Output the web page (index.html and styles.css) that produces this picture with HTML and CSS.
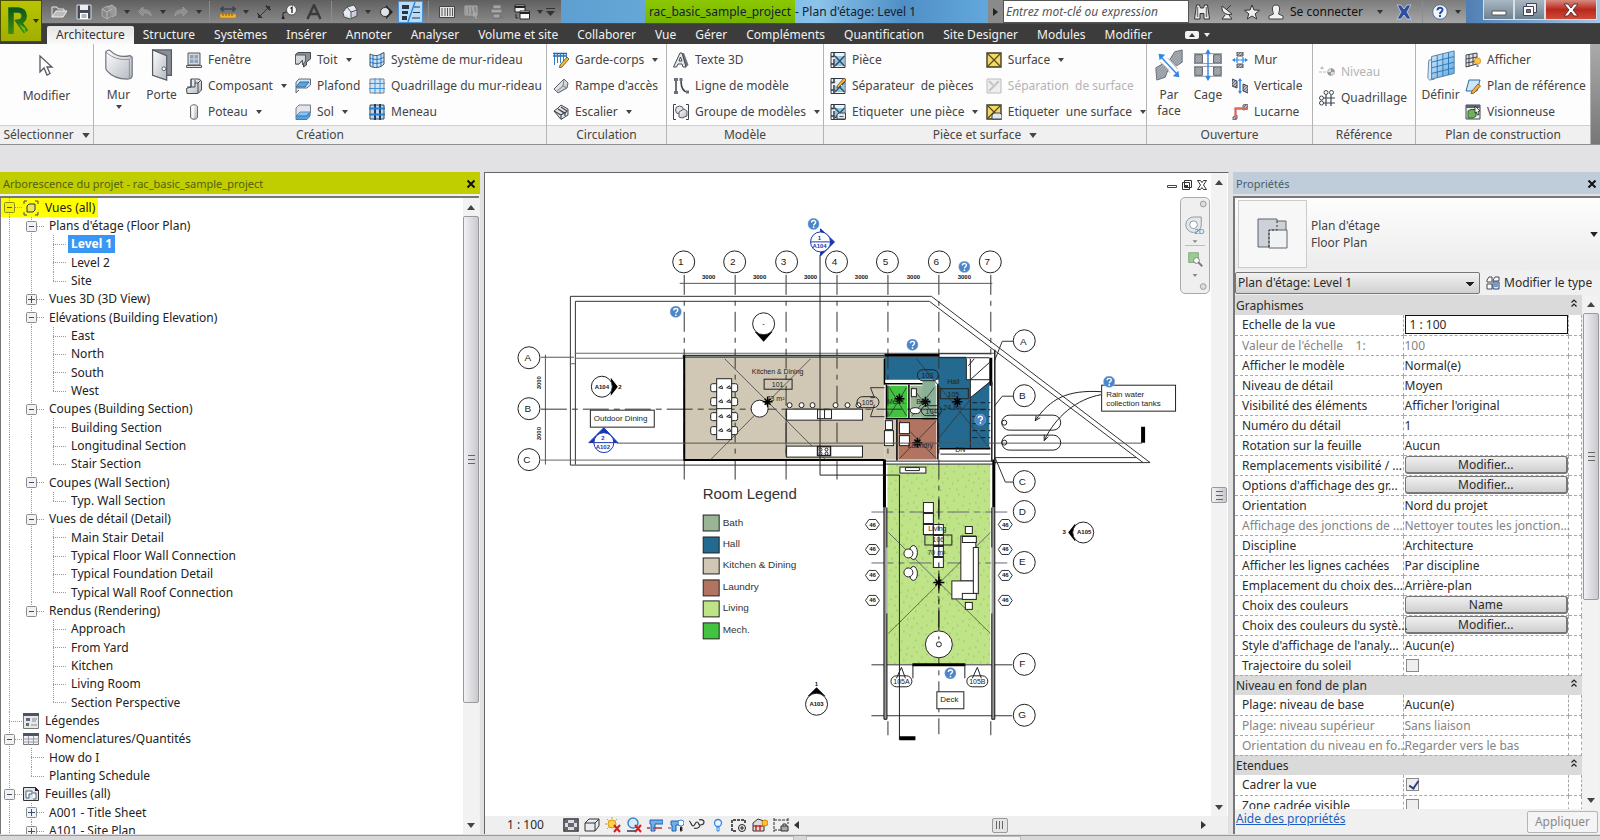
FILE: index.html
```html
<!DOCTYPE html>
<html lang="fr">
<head>
<meta charset="utf-8">
<title>rac_basic_sample_project - Plan d'étage: Level 1</title>
<link rel="stylesheet" href="styles.css">
</head>
<body>
<svg class="defs" aria-hidden="true">
<defs>
<linearGradient id="gr" x1="0" y1="0" x2="1" y2="1"><stop offset="0" stop-color="#fff"/><stop offset="1" stop-color="#b4b8c0"/></linearGradient>
<linearGradient id="bl" x1="0" y1="0" x2="1" y2="1"><stop offset="0" stop-color="#d6ecfb"/><stop offset="1" stop-color="#5fa3dc"/></linearGradient>
<linearGradient id="dk" x1="0" y1="0" x2="0" y2="1"><stop offset="0" stop-color="#0c5a1e"/><stop offset="1" stop-color="#3f8f10"/></linearGradient>
<pattern id="hatch" width="3" height="3" patternUnits="userSpaceOnUse"><rect width="3" height="3" fill="#b9bdc3"/><path d="M0 3L3 0" stroke="#555b63" stroke-width=".8"/></pattern>
<pattern id="grass" width="31" height="29" patternUnits="userSpaceOnUse"><rect width="31" height="29" fill="#bfe488"/><path d="M3 4h1M9 11h1M17 3h1M24 8h1M28 17h1M13 19h1M5 23h1M20 25h1M8 17h1M23 20h1M15 10h1M29 2h1M2 13h1M18 15h1M11 27h1M27 26h1" stroke="#7a9a4c" stroke-width="1"/></pattern>
<symbol id="minus" viewBox="0 0 11 11"><rect x=".5" y=".5" width="10" height="10" rx="1" fill="#f2f2f2" stroke="#8c8c8c"/><path d="M3 5.500h5" stroke="#35507e"/></symbol>
<symbol id="minusy" viewBox="0 0 11 11"><rect x=".5" y=".5" width="10" height="10" rx="1" fill="#f4f400" stroke="#8c8c20"/><path d="M3 5.500h5" stroke="#35507e"/></symbol>
<symbol id="plus" viewBox="0 0 11 11"><rect x=".5" y=".5" width="10" height="10" rx="1" fill="#f2f2f2" stroke="#8c8c8c"/><path d="M2 5.500h7M5.500 2v7" stroke="#35507e"/></symbol>
<symbol id="caret" viewBox="0 0 6 4"><path d="M0 0h6L3 4z" fill="currentColor"/></symbol>
<symbol id="up" viewBox="0 0 8 5"><path d="M4 0l4 5H0z" fill="#444"/></symbol>
<symbol id="down" viewBox="0 0 8 5"><path d="M4 5l4-5H0z" fill="#444"/></symbol>
<symbol id="close" viewBox="0 0 10 10"><path d="M1.500 1.500l7 7M8.500 1.500l-7 7" stroke="#111" stroke-width="2"/></symbol>
<symbol id="fold" viewBox="0 0 6 8"><path d="M.5 3.500L3 1l2.500 2.500M.5 7.500L3 5l2.500 2.500" fill="none" stroke="#222" stroke-width="1.200"/></symbol>
<symbol id="help" viewBox="0 0 12 12"><circle cx="6" cy="6" r="5.700" fill="#4a86c8" stroke="#8fb4de" stroke-width=".6"/><path d="M4 4.600C4 2 8.200 2 8.100 4.500 8 6 6.200 5.900 6.100 7.500" fill="none" stroke="#fff" stroke-width="1.400"/><circle cx="6.100" cy="9.300" r=".9" fill="#fff"/></symbol>

<symbol id="open" viewBox="0 0 16 16"><path d="M1 13V3h5l1 2h6v3" fill="#777" stroke="#e6e6e6"/><path d="M1 13l4-6h11l-4 6z" fill="#bbb" stroke="#f0f0f0"/></symbol>
<symbol id="save" viewBox="0 0 16 16"><path d="M1 1h14v14H1z" fill="#444b55" stroke="#d8dde6"/><path d="M4 1h8v5H4z" fill="#e9edf2"/><path d="M4 9h8v6H4z" fill="#fff"/><path d="M5.500 11h5M5.500 13h5" stroke="#667"/></symbol>
<symbol id="sync" viewBox="0 0 16 16"><path d="M1 5l5-3 5 3v7l-5 3-5-3z" fill="#888" stroke="#aaa"/><path d="M6 3l5-2 4 3v7l-4 2" fill="#999" stroke="#b0b0b0"/><path d="M6 8v7M1 5l5 3 5-3" stroke="#b8b8b8" fill="none"/></symbol>
<symbol id="undo" viewBox="0 0 16 16"><path d="M6 3L1.500 7.500 6 12V9c4-.5 6 .5 8 3 0-4.500-3-6.500-8-6z" fill="#8d8d8d" stroke="#a5a5a5" stroke-width=".7"/></symbol>
<symbol id="redo" viewBox="0 0 16 16"><path d="M10 3l4.500 4.500L10 12V9c-4-.5-6 .5-8 3 0-4.500 3-6.500 8-6z" fill="#8d8d8d" stroke="#a5a5a5" stroke-width=".7"/></symbol>
<symbol id="measure" viewBox="0 0 16 16"><path d="M1 5h14M3.500 2.500L1 5l2.500 2.500M12.500 2.500L15 5l-2.500 2.500" stroke="#3c4656" fill="none" stroke-width="1.600"/><path d="M0 10h16v4H0z" fill="#f2b32c" stroke="#b98210" stroke-width=".6"/><path d="M3 10v2M6 10v2M9 10v2M12 10v2" stroke="#7d570a"/></symbol>
<symbol id="dim" viewBox="0 0 16 16"><path d="M3 13L13 3M1 9l5 5M10 1l5 5" stroke="#333" fill="none"/><path d="M2 14v-5l5 5zM14 2v5L9 2z" fill="#333"/></symbol>
<symbol id="tag" viewBox="0 0 16 16"><path d="M2 14V9l6-2" stroke="#222" fill="none"/><path d="M.5 15l1.500-4 2 4z" fill="#222"/><circle cx="10.500" cy="6" r="5" fill="#f4f4f4" stroke="#555"/><path d="M9.500 4.500l1.500-1.200V9" stroke="#222" fill="none" stroke-width="1.300"/></symbol>
<symbol id="bigA" viewBox="0 0 16 16"><path d="M1.500 15L8 1l6.500 14M4 10h8" fill="none" stroke="#3a3a3a" stroke-width="2.400"/></symbol>
<symbol id="house" viewBox="0 0 16 16"><path d="M1 8l5-5 9 2v7l-7 3-6-2z" fill="url(#gr)" stroke="#4c5158"/><path d="M1 8l4-5 4 5v7M5 3l7-2 3 5-6 2" fill="#e8ebf0" stroke="#4c5158"/></symbol>
<symbol id="sect" viewBox="0 0 16 16"><path d="M8 1l7 7-7 7z" fill="#222"/><circle cx="7" cy="8" r="4.500" fill="#dfe3e8" stroke="#333"/></symbol>
<symbol id="thin" viewBox="0 0 20 20"><path d="M1 3h7v4H1zM1 9h6v3H1zM1 14h5v4H1z" fill="#26364a"/><path d="M14 0L7 20" stroke="#2684dd" stroke-width="1.400"/><path d="M13 5h6M12 10.500h7M11 16h8" stroke="#26364a" stroke-width="1.200"/></symbol>
<symbol id="win" viewBox="0 0 16 16"><path d="M.5 2.500h15v11H.5z" fill="#e4e4e4" stroke="#444"/><path d="M3 4v8M6 4v8M8.500 4v8M11 4v8M13.500 4v8" stroke="#555"/></symbol>
<symbol id="win2" viewBox="0 0 16 16"><path d="M1 2h12v9H1z" fill="#888" stroke="#b0b0b0"/><path d="M3 3v7M6 3v7M9 3v4" stroke="#bbb"/><path d="M9 6l5 5-2 .5 1 3-1.500.5-1-3L9 13z" fill="#a8a8a8"/></symbol>
<symbol id="win3" viewBox="0 0 16 16"><path d="M4 1h8v4H4zM2 5h11v4H2zM4 10h7v4H4z" fill="#a6a6a6" stroke="#707070"/><path d="M11 11l4 4M15 11l-4 4" stroke="#777"/></symbol>
<symbol id="win4" viewBox="0 0 16 16"><path d="M1 1h10v7H1z" fill="#eee" stroke="#222"/><path d="M6 7h9.500v8H6z" fill="#f8f8f8" stroke="#222"/><path d="M1 3h10M6 9h9" stroke="#222" stroke-width="2"/><path d="M2 10v4h2" fill="none" stroke="#222"/></symbol>
<symbol id="custom" viewBox="0 0 9 8"><path d="M0 .5h9" stroke="#333"/><path d="M0 3h9L4.500 8z" fill="#333"/></symbol>
<symbol id="bino" viewBox="0 0 16 16"><path d="M2.500 1h3l1 3h3l1-3h3L15.500 15h-5.500V9.500H6V15H.5z" fill="#eee" stroke="#333"/><path d="M3.500 3v10M12.500 3v10" stroke="#777" stroke-width="1.500"/></symbol>
<symbol id="dish" viewBox="0 0 16 16"><path d="M3 2c-1 6 4 10 10 8L3 2z" fill="#f2f2f2" stroke="#333"/><path d="M7 6l5-5M6 11l-3 4h10l-3-4" stroke="#333" fill="#f2f2f2"/></symbol>
<symbol id="star" viewBox="0 0 16 16"><path d="M8 1l2 5 5.500.3-4.300 3.500L12.700 15 8 12l-4.700 3 1.500-5.200L.5 6.300 6 6z" fill="#eee" stroke="#333"/></symbol>
<symbol id="user" viewBox="0 0 16 16"><path d="M8 1c3 0 4 2 3.500 5-.3 2-1 3-1 4l4.500 2v3H1v-3l4.500-2c0-1-.7-2-1-4C4 3 5 1 8 1z" fill="#f2f2f2" stroke="#444"/></symbol>
<symbol id="xch" viewBox="0 0 16 16"><path d="M1 1h4l3 4 3-4h4l-4 7 4 7h-4l-3-4-3 4H1l4-7z" fill="#2f4e9e" stroke="#c9d4ee" stroke-width=".8"/></symbol>
<symbol id="helpb" viewBox="0 0 16 16"><circle cx="8" cy="8" r="7.300" fill="#f2f5fa" stroke="#5b6c8c"/><path d="M5.500 6.300C5.500 3 10.700 3 10.500 6 10.400 8 8.100 7.800 8 10" fill="none" stroke="#1f4fa8" stroke-width="2"/><circle cx="8" cy="12" r="1.200" fill="#1f4fa8"/></symbol>

<symbol id="arrow" viewBox="0 0 16 24"><path d="M2 2v16l4-4 3 7 3-1.500L9 13h5z" fill="#fff" stroke="#555b63" stroke-width="1.300"/></symbol>
<symbol id="mur" viewBox="0 0 30 34"><path d="M1 3c2-2 4-2 5-1 5 5 13 7 21 5l2 2v19c0 3-2 4-5 4-9 0-17-3-22-9-1-1-1-2-1-3z" fill="url(#gr)" stroke="#70757d" stroke-width="1.300"/><path d="M1 3c6 6 14 9 25 8v21M26 11l3-3" fill="none" stroke="#8b9098"/></symbol>
<symbol id="porte" viewBox="0 0 22 34"><path d="M1 1h20v27h-5" fill="#8a8e96" stroke="#565b63" stroke-width="1.300"/><path d="M1 1l15 6v26L1 28z" fill="url(#gr)" stroke="#565b63" stroke-width="1.300"/><circle cx="13" cy="21" r="2" fill="#fff" stroke="#565b63"/></symbol>
<symbol id="fen" viewBox="0 0 16 16"><path d="M2 1h12v12H2z" fill="#d5d8dd" stroke="#555b63"/><path d="M4 3h3.500v3.500H4zM8.500 3H12v3.500H8.500zM4 7.500h3.500V11H4zM8.500 7.500H12V11H8.500z" fill="#8fa3b8"/><path d="M.5 13.500h15v2H.5z" fill="#e5e5e8" stroke="#555b63"/></symbol>
<symbol id="comp" viewBox="0 0 16 16"><path d="M5 1h8l2.500 2v9L12 15.500H1l-.5-5L5 9z" fill="url(#gr)" stroke="#454b53"/><path d="M5 1v8M9 2v7h-8M12 5v10M9 5h3l3-3" stroke="#454b53" fill="none"/></symbol>
<symbol id="pot" viewBox="0 0 16 16"><path d="M4.500 3c0-3 7-3 7 0v10c0 3-7 3-7 0z" fill="url(#gr)" stroke="#666c74"/><path d="M7 2v12" stroke="#fff" stroke-width="1.500"/></symbol>
<symbol id="toit" viewBox="0 0 16 16"><path d="M.5 2.500L3 .5h12.500V7l-4 3v3l-3 2V8L4 12H.5z" fill="#8b9097" stroke="#454b53"/><path d="M.5 3h10v6l-3 4V8L4 12H.5z" fill="#d4d7dc" stroke="#555b63"/></symbol>
<symbol id="plaf" viewBox="0 0 16 16"><path d="M1 4l3-3h11.500v6L12 10H1z" fill="#c9e3f7" stroke="#666c74"/><path d="M5 4h9l-4 5H1z" fill="#5fa3dc" stroke="#2c6ea8"/><path d="M1 10v5l3-3" fill="#ddd" stroke="#666c74"/></symbol>
<symbol id="sol" viewBox="0 0 16 16"><path d="M4 1h11.500v8L12 12H1V4z" fill="#e2e5e9" stroke="#777d85"/><path d="M5 8h10l-4 4H1z" fill="#8cc3ee" stroke="#4c92cf"/><path d="M1 12h11l3-3v3l-3 3.500H1z" fill="#5aa0de" stroke="#3a80bf"/></symbol>
<symbol id="smr" viewBox="0 0 16 16"><path d="M1 2c4 2 8 2 11 0l3-1.500V12c-3 4-10 4.500-14 2z" fill="#cfe6f8" stroke="#3f4a58"/><path d="M4 3v12M8 3.500v12M12 2v12M1 6c4 2 10 2 14-1M1 10c4 2 10 2 14-1" stroke="#1f74c4" fill="none"/></symbol>
<symbol id="qmr" viewBox="0 0 16 16"><path d="M1 1h14v14H1z" fill="#cfe4f5" stroke="#7d838b"/><path d="M6 0v16M11 0v16M0 5.500h16M0 10.500h16" stroke="#3d93e0"/></symbol>
<symbol id="men" viewBox="0 0 16 16"><path d="M1 1h14v14H1z" fill="#b9d9f2" stroke="#3a4450"/><path d="M6 0v16M11 0v16" stroke="#1f3f66" stroke-width="2"/><path d="M0 4.500h16M0 10.500h16" stroke="#2d7cc4" stroke-width="2"/></symbol>
<symbol id="garde" viewBox="0 0 16 16"><path d="M0 1.500h14M0 4h14" stroke="#1f62ae" stroke-width="1.600"/><path d="M1.500 2v11M4.500 2v9M7.500 2v9M10.500 2v8M13.500 2v6" stroke="#2d7cc4"/><path d="M14 5l2 2-7 8-2.500 1L7 13z" fill="#f3b545" stroke="#6b4a10" stroke-width=".8"/></symbol>
<symbol id="rampe" viewBox="0 0 16 16"><path d="M1 11L11 1l4 4-1 5-9 5z" fill="url(#gr)" stroke="#5c626a"/><path d="M11 1l-1 7-7 6M10 8l4 2" fill="none" stroke="#7c828a"/></symbol>
<symbol id="esc" viewBox="0 0 16 16"><path d="M1 7l4-3 3-3 7 4v6l-7 4.500z" fill="#e2e4e8" stroke="#454b53"/><path d="M1 7l7 4 3-2-6-4M8 11v4M5 5l7 4 2-2-6-4M12 9v3" fill="none" stroke="#454b53" stroke-width="1.300"/></symbol>
<symbol id="t3d" viewBox="0 0 16 16"><path d="M8 1h3l4.500 12-3 2.500L7 8z" fill="#6c727a"/><path d="M7 1h2l4 14h-3l-1-3H5l-1.500 3H.5z" fill="#e5e7ea" stroke="#444a52"/><path d="M6 9l1.500-4L9 9z" fill="#fff" stroke="#444a52"/></symbol>
<symbol id="lign" viewBox="0 0 16 16"><path d="M3 2v12M8 2c0 8 2 12 7 12" stroke="#3e444c" fill="none" stroke-width="1.500"/><path d="M1 0h4v3H1zM1 13h4v3H1zM6.500 0h3v3h-3zM13 12.500h3v3h-3z" fill="#6b7179"/></symbol>
<symbol id="grp" viewBox="0 0 16 16"><path d="M3 .5H.5v15H3M13 .5h2.500v15H13" fill="none" stroke="#3e444c"/><circle cx="6.500" cy="6" r="4" fill="#e2e4e8" stroke="#555b63"/><path d="M6 8l5-3 3 2v5l-5 2-3-1z" fill="url(#gr)" stroke="#555b63"/></symbol>
<symbol id="piece" viewBox="0 0 16 16"><path d="M1 .5h14v15H1z" fill="#f0f2f4" stroke="#2e3946"/><path d="M4 .5v4H1M4 7v8.500M1 12h3" fill="none" stroke="#2e3946" stroke-width="1.500"/><path d="M5 4h9.500v10H5z" fill="#9cc6df"/><path d="M5 4l9.500 10M14.500 4L5 14" stroke="#24506f" stroke-width="1.400"/></symbol>
<symbol id="psep" viewBox="0 0 16 16"><use href="#piece" width="16" height="16"/><path d="M5 4h7v4H5z" fill="#eef"/><path d="M14 0l2 2-7 7-2 1 .5-2.500z" fill="#f3b545" stroke="#6b4a10" stroke-width=".8"/></symbol>
<symbol id="petiq" viewBox="0 0 16 16"><use href="#piece" width="16" height="16"/><path d="M7 10.500l2-1.500h6.500v6H7z" fill="#e2e7ee" stroke="#3e444c"/><path d="M9.500 12.500h4" stroke="#555"/></symbol>
<symbol id="surf" viewBox="0 0 16 16"><path d="M1 1h14v14H1z" fill="#f3d96a" stroke="#3e3a22" stroke-width="1.400"/><path d="M2 2l12 12M14 2L2 14" stroke="#5a4c12" stroke-width="1.200"/></symbol>
<symbol id="ssep" viewBox="0 0 16 16"><path d="M1 1h14v14H1z" fill="#eee" stroke="#bbb"/><path d="M3 13L13 3M3 3l4 4" stroke="#c4c4c4" stroke-width="2"/></symbol>
<symbol id="setiq" viewBox="0 0 16 16"><use href="#surf" width="16" height="16"/><path d="M6 11l2-2h6l2 2v4H6z" fill="#e2e7ee" stroke="#3e444c"/></symbol>
<symbol id="face" viewBox="0 0 30 34"><path d="M16 11l5-8 8-2v13l-6 4z" fill="url(#hatch)" stroke="#666c74"/><path d="M1 20l7-4 6 6-3 8-9 3z" fill="url(#hatch)" stroke="#666c74"/><path d="M14 10l10 11M6 14l10 11" stroke="#aab" /><path d="M6 8l18 19" stroke="#2f86e4" stroke-width="1.500"/><path d="M4 5l7 1-6 6zM26 30l-7-1 6-6z" fill="#2f86e4"/></symbol>
<symbol id="cage" viewBox="0 0 30 34"><path d="M1 6h8v9H1zM21 6h8v9h-8zM1 19h8v9H1zM21 19h8v9h-8z" fill="url(#hatch)" stroke="#4e545c"/><path d="M0 5h30M0 15.500h30M0 18.500h30M0 29h30" stroke="#8b9098"/><path d="M15 4v26" stroke="#2f86e4" stroke-width="1.500"/><path d="M15 0l3 5h-6zM15 34l3-5h-6z" fill="#2f86e4"/></symbol>
<symbol id="omur" viewBox="0 0 16 16"><path d="M5 0h6v4H5zM5 12h6v4H5z" fill="url(#hatch)" stroke="#4e545c"/><path d="M1 8h14M5 5v6M11 5v6" stroke="#2f86e4" stroke-width="1.200"/><path d="M0 8l3-2v4zM16 8l-3-2v4z" fill="#2f86e4"/></symbol>
<symbol id="over" viewBox="0 0 16 16"><path d="M0 1l5 2v7L0 8zM11 6l5 2v7l-5-2z" fill="url(#hatch)" stroke="#3e444c"/><path d="M8 1v14" stroke="#2f86e4" stroke-width="1.500"/><path d="M8 0l2 3H6zM8 16l2-3H6z" fill="#2f86e4"/></symbol>
<symbol id="luc" viewBox="0 0 16 16"><path d="M11 1l5-1v5l-5 1zM1 13l4-2v4l-4 1z" fill="url(#hatch)" stroke="#666"/><path d="M4 14V5h11M3 12V4h10" stroke="#e0655c" fill="none" stroke-width="1.300"/></symbol>
<symbol id="niv" viewBox="0 0 16 16"><path d="M0 8h9" stroke="#bbb" stroke-dasharray="3 1"/><path d="M3 2l2 3H1z" fill="#bbb"/><circle cx="12" cy="8" r="3.500" fill="#ddd" stroke="#bbb"/><path d="M12 4.500V8h3.500a3.500 3.500 0 0 0-3.500-3.500zM12 11.500V8H8.500a3.500 3.500 0 0 0 3.500 3.500z" fill="#999"/></symbol>
<symbol id="quad" viewBox="0 0 16 16"><path d="M7 5v11M12 5v11M4 8h12M4 13h12" stroke="#3e444c" stroke-width="1.200"/><circle cx="7" cy="2.500" r="2" fill="#fff" stroke="#3e444c"/><circle cx="12.500" cy="2.500" r="2" fill="#fff" stroke="#3e444c"/><circle cx="2.500" cy="8" r="2" fill="#fff" stroke="#3e444c"/><circle cx="2.500" cy="13" r="2" fill="#fff" stroke="#3e444c"/></symbol>
<symbol id="def" viewBox="0 0 30 34"><path d="M2 12l6-2v22l-5 1-2-2z" fill="#d9e8f4" stroke="#5d87ab"/><path d="M5 8l24-6v24L5 32z" fill="url(#bl)" stroke="#4b7ea8"/><path d="M11 6.500v24M17 5v24M23 3.500v24M5 14l24-6M5 20l24-6M5 26l24-6" stroke="#2b76b8"/></symbol>
<symbol id="aff" viewBox="0 0 16 16"><path d="M1 3l11-2v11L1 15z" fill="#e3e5e8" stroke="#3e444c"/><path d="M4 2.500v12M8 2v11M1 7l11-2M1 11l11-2" stroke="#3e444c"/><circle cx="12.500" cy="9" r="3.200" fill="#ffc44a" stroke="#d08a10" stroke-width=".7"/><path d="M11.500 12.500h2V15h-2z" fill="#889"/></symbol>
<symbol id="pref" viewBox="0 0 16 16"><path d="M4 2h11l-3 11H1z" fill="#cfe6f8" stroke="#2d6ca8"/><path d="M13 6l2.500 2L9 15l-3 1L7 13z" fill="#f3b545" stroke="#6b4a10" stroke-width=".8"/></symbol>
<symbol id="vis" viewBox="0 0 16 16"><path d="M1 1h14v14H1z" fill="#e9ebee" stroke="#3e444c"/><path d="M1 1h14v3H1z" fill="#5d636b"/><path d="M3 7l3-1.500h5V12l-3 2H3z" fill="#6fb25c" stroke="#2e5e22"/><path d="M10 2l5 5-2 .5 1 3-1.500.5-1-3L10 9z" fill="#fff" stroke="#222" stroke-width=".8"/></symbol>
</defs>
</svg>

<header class="top">
  <div class="titlebar">
    <div class="qat">
      <button aria-label="Ouvrir"><svg><use href="#open"/></svg></button><button aria-label="Enregistrer"><svg><use href="#save"/></svg></button><button aria-label="Synchroniser"><svg><use href="#sync"/></svg></button><button class="cr" aria-label="Plus"><svg><use href="#caret"/></svg></button><button aria-label="Annuler"><svg><use href="#undo"/></svg></button><button class="cr" aria-label="Plus"><svg><use href="#caret"/></svg></button><button aria-label="Rétablir"><svg><use href="#redo"/></svg></button><button class="cr" aria-label="Plus"><svg><use href="#caret"/></svg></button><span class="sep"></span><button aria-label="Mesurer"><svg><use href="#measure"/></svg></button><button class="cr" aria-label="Plus"><svg><use href="#caret"/></svg></button><button aria-label="Cote"><svg><use href="#dim"/></svg></button><button aria-label="Etiquette"><svg><use href="#tag"/></svg></button><button aria-label="Texte"><svg><use href="#bigA"/></svg></button><span class="sep"></span><button aria-label="Vue 3D"><svg><use href="#house"/></svg></button><button class="cr" aria-label="Plus"><svg><use href="#caret"/></svg></button><button aria-label="Coupe"><svg><use href="#sect"/></svg></button><button class="on" aria-label="Lignes fines"><svg><use href="#thin"/></svg></button><span class="sep"></span><button aria-label="Fenêtre"><svg><use href="#win"/></svg></button><button aria-label="Fermer"><svg><use href="#win2"/></svg></button><button aria-label="Remplacer"><svg><use href="#win3"/></svg></button><button aria-label="Basculer"><svg><use href="#win4"/></svg></button><button class="cr" aria-label="Plus"><svg><use href="#caret"/></svg></button><button class="cr last" aria-label="Personnaliser"><svg><use href="#custom"/></svg></button>
    </div>
    <div class="doc"><mark>rac_basic_sample_project</mark><span>- Plan d'étage: Level 1</span></div>
    <div class="expand"><svg viewBox="0 0 5 8"><path d="M0 0l5 4-5 4z" fill="#222"/></svg></div>
    <input class="search" type="text" aria-label="Recherche" placeholder="Entrez mot-clé ou expression">
    <div class="info">
      <button aria-label="Rechercher"><svg><use href="#bino"/></svg></button><button aria-label="Communication"><svg><use href="#dish"/></svg></button><button aria-label="Favoris"><svg><use href="#star"/></svg></button>
      <button class="conn"><svg><use href="#user"/></svg>Se connecter</button><button class="cr" aria-label="Plus"><svg><use href="#caret"/></svg></button><button aria-label="Exchange"><svg><use href="#xch"/></svg></button><span class="sep"></span><button aria-label="Aide"><svg><use href="#helpb"/></svg></button><button class="cr" aria-label="Plus"><svg><use href="#caret"/></svg></button>
    </div>
    <div class="wctl">
      <button aria-label="Réduire"><svg viewBox="0 0 16 16"><path d="M1 9h14v4H1z" fill="#fff" stroke="#555"/></svg></button><button aria-label="Restaurer"><svg viewBox="0 0 16 16"><path d="M4.500 1.500h10v9h-10z" fill="#eee" stroke="#445"/><path d="M1.500 4.500h10v9h-10z" fill="#fff" stroke="#445"/><path d="M4.500 7.500h4v3h-4z" fill="#778" stroke="#445"/></svg></button><button class="x" aria-label="Fermer"><svg viewBox="0 0 16 16"><path d="M1 2h4l3 4 3-4h4l-5 6 5 6h-4l-3-4-3 4H1l5-6z" fill="#fff" stroke="#533"/></svg></button>
    </div>
  </div>
  <nav class="tabs">
    <a class="sel" href="#a">Architecture</a><a href="#a">Structure</a><a href="#a">Systèmes</a><a href="#a">Insérer</a><a href="#a">Annoter</a><a href="#a">Analyser</a><a href="#a">Volume et site</a><a href="#a">Collaborer</a><a href="#a">Vue</a><a href="#a">Gérer</a><a href="#a">Compléments</a><a href="#a">Quantification</a><a href="#a">Site Designer</a><a href="#a">Modules</a><a href="#a">Modifier</a>
    <button class="min" aria-label="Réduire le ruban"><svg class="pill" viewBox="0 0 14 8"><rect width="14" height="8" rx="2" fill="#f2f2f2"/><path d="M7 2l3 4H4z" fill="#333"/></svg><svg class="c"><use href="#caret"/></svg></button>
  </nav>
  <button class="app" aria-label="Menu de l'application"><svg class="r" viewBox="0 0 20 28"><path d="M3 27V3h7c8 0 8 11 1 12l7 10" fill="none" stroke="url(#dk)" stroke-width="5.500"/><path d="M11 17l6 4 1 6" fill="#6fbf12"/></svg><svg class="c"><use href="#caret"/></svg></button>

  <div class="ribbon">
    <section class="panel"><div class="body mod"><button class="big"><svg class="ar"><use href="#arrow"/></svg>Modifier</button></div><h2>Sélectionner <svg class="c"><use href="#caret"/></svg></h2></section>
    <section class="panel"><div class="body">
      <button class="big"><svg><use href="#mur"/></svg>Mur<svg class="c"><use href="#caret"/></svg></button>
      <button class="big"><svg><use href="#porte"/></svg>Porte</button>
      <div class="col c1"><button><svg><use href="#fen"/></svg>Fenêtre</button><button><svg><use href="#comp"/></svg>Composant<svg class="c"><use href="#caret"/></svg></button><button><svg><use href="#pot"/></svg>Poteau<svg class="c"><use href="#caret"/></svg></button></div>
      <div class="col c2"><button><svg><use href="#toit"/></svg>Toit<svg class="c"><use href="#caret"/></svg></button><button><svg><use href="#plaf"/></svg>Plafond</button><button><svg><use href="#sol"/></svg>Sol<svg class="c"><use href="#caret"/></svg></button></div>
      <div class="col"><button><svg><use href="#smr"/></svg>Système de mur-rideau</button><button><svg><use href="#qmr"/></svg>Quadrillage du mur-rideau</button><button><svg><use href="#men"/></svg>Meneau</button></div>
    </div><h2>Création</h2></section>
    <section class="panel"><div class="body"><div class="col"><button><svg><use href="#garde"/></svg>Garde-corps<svg class="c"><use href="#caret"/></svg></button><button><svg><use href="#rampe"/></svg>Rampe d'accès</button><button><svg><use href="#esc"/></svg>Escalier<svg class="c"><use href="#caret"/></svg></button></div></div><h2>Circulation</h2></section>
    <section class="panel"><div class="body"><div class="col"><button><svg><use href="#t3d"/></svg>Texte 3D</button><button><svg><use href="#lign"/></svg>Ligne de modèle</button><button><svg><use href="#grp"/></svg>Groupe de modèles<svg class="c"><use href="#caret"/></svg></button></div></div><h2>Modèle</h2></section>
    <section class="panel"><div class="body"><div class="col c3"><button><svg><use href="#piece"/></svg>Pièce</button><button><svg><use href="#psep"/></svg>Séparateur  de pièces</button><button><svg><use href="#petiq"/></svg>Etiqueter  une pièce<svg class="c"><use href="#caret"/></svg></button></div>
      <div class="col"><button><svg><use href="#surf"/></svg>Surface<svg class="c"><use href="#caret"/></svg></button><button class="off" disabled><svg><use href="#ssep"/></svg>Séparation  de surface</button><button><svg><use href="#setiq"/></svg>Etiqueter  une surface<svg class="c"><use href="#caret"/></svg></button></div></div><h2>Pièce et surface <svg class="c"><use href="#caret"/></svg></h2></section>
    <section class="panel"><div class="body ouv"><button class="big"><svg><use href="#face"/></svg>Par<br>face</button><button class="big"><svg><use href="#cage"/></svg>Cage</button>
      <div class="col"><button><svg><use href="#omur"/></svg>Mur</button><button><svg><use href="#over"/></svg>Verticale</button><button><svg><use href="#luc"/></svg>Lucarne</button></div></div><h2>Ouverture</h2></section>
    <section class="panel"><div class="body"><div class="col mid"><button class="off" disabled><svg><use href="#niv"/></svg>Niveau</button><button><svg><use href="#quad"/></svg>Quadrillage</button></div></div><h2>Référence</h2></section>
    <section class="panel"><div class="body"><button class="big"><svg><use href="#def"/></svg>Définir</button>
      <div class="col"><button><svg><use href="#aff"/></svg>Afficher</button><button><svg><use href="#pref"/></svg>Plan de référence</button><button><svg><use href="#vis"/></svg>Visionneuse</button></div></div><h2>Plan de construction</h2></section>
    <div class="tail"></div>
  </div>
</header>

<main class="work">
  <section class="browser">
    <h1>Arborescence du projet - rac_basic_sample_project<button aria-label="Fermer"><svg><use href="#close"/></svg></button></h1>
    <div class="pane">
      <ul class="tree">
        <li><span class="hl"><button class="t" aria-label="Réduire"><svg><use href="#minusy"/></svg></button><svg class="ic" viewBox="0 0 16 16"><path d="M1 4V1h3M12 1h3v3M15 12v3h-3M4 15H1v-3" fill="none" stroke="#444"/><path d="M4 6l2-2h6v6l-2 2H4z" fill="#e8e860" stroke="#333"/></svg>Vues (all)</span></li>
        <li><i class="v"></i><button class="t" aria-label="Réduire"><svg><use href="#minus"/></svg></button><span>Plans d'étage (Floor Plan)</span></li>
        <li><i class="v"></i><i class="v"></i><i class="e"></i><b>Level 1</b></li>
        <li><i class="v"></i><i class="v"></i><i class="e"></i><span>Level 2</span></li>
        <li><i class="v"></i><i class="v"></i><i class="e z"></i><span>Site</span></li>
        <li><i class="v"></i><button class="t" aria-label="Développer"><svg><use href="#plus"/></svg></button><span>Vues 3D (3D View)</span></li>
        <li><i class="v"></i><button class="t" aria-label="Réduire"><svg><use href="#minus"/></svg></button><span>Elévations (Building Elevation)</span></li>
        <li><i class="v"></i><i class="v"></i><i class="e"></i><span>East</span></li>
        <li><i class="v"></i><i class="v"></i><i class="e"></i><span>North</span></li>
        <li><i class="v"></i><i class="v"></i><i class="e"></i><span>South</span></li>
        <li><i class="v"></i><i class="v"></i><i class="e z"></i><span>West</span></li>
        <li><i class="v"></i><button class="t" aria-label="Réduire"><svg><use href="#minus"/></svg></button><span>Coupes (Building Section)</span></li>
        <li><i class="v"></i><i class="v"></i><i class="e"></i><span>Building Section</span></li>
        <li><i class="v"></i><i class="v"></i><i class="e"></i><span>Longitudinal Section</span></li>
        <li><i class="v"></i><i class="v"></i><i class="e z"></i><span>Stair Section</span></li>
        <li><i class="v"></i><button class="t" aria-label="Réduire"><svg><use href="#minus"/></svg></button><span>Coupes (Wall Section)</span></li>
        <li><i class="v"></i><i class="v"></i><i class="e z"></i><span>Typ. Wall Section</span></li>
        <li><i class="v"></i><button class="t" aria-label="Réduire"><svg><use href="#minus"/></svg></button><span>Vues de détail (Detail)</span></li>
        <li><i class="v"></i><i class="v"></i><i class="e"></i><span>Main Stair Detail</span></li>
        <li><i class="v"></i><i class="v"></i><i class="e"></i><span>Typical Floor Wall Connection</span></li>
        <li><i class="v"></i><i class="v"></i><i class="e"></i><span>Typical Foundation Detail</span></li>
        <li><i class="v"></i><i class="v"></i><i class="e z"></i><span>Typical Wall Roof Connection</span></li>
        <li><i class="v"></i><button class="t end" aria-label="Réduire"><svg><use href="#minus"/></svg></button><span>Rendus (Rendering)</span></li>
        <li><i class="v"></i><i></i><i class="e"></i><span>Approach</span></li>
        <li><i class="v"></i><i></i><i class="e"></i><span>From Yard</span></li>
        <li><i class="v"></i><i></i><i class="e"></i><span>Kitchen</span></li>
        <li><i class="v"></i><i></i><i class="e"></i><span>Living Room</span></li>
        <li><i class="v"></i><i></i><i class="e z"></i><span>Section Perspective</span></li>
        <li><i class="e"></i><svg class="ic" viewBox="0 0 16 16"><path d="M.5.500h15v15H.5z" fill="#e6e8ea" stroke="#777"/><path d="M0 0h16v3H0z" fill="#4b5662"/><path d="M3 5h4v3H3zM3 10h3v3H3z" fill="#667"/><path d="M9 6h5M9 8h4M8 12h6" stroke="#889"/></svg>Légendes</li>
        <li><button class="t" aria-label="Réduire"><svg><use href="#minus"/></svg></button><svg class="ic" viewBox="0 0 16 16"><path d="M.5 2.500h15v11H.5z" fill="#f2f3f5" stroke="#777"/><path d="M0 2h16v3H0z" fill="#4b5662"/><path d="M5.500 5v9M10.500 5v9M0 8h16M0 11h16" stroke="#99a"/></svg>Nomenclatures/Quantités</li>
        <li><i class="v"></i><i class="e"></i><span>How do I</span></li>
        <li><i class="v"></i><i class="e z"></i><span>Planting Schedule</span></li>
        <li><button class="t" aria-label="Réduire"><svg><use href="#minus"/></svg></button><svg class="ic" viewBox="0 0 16 16"><path d="M.5 1.500h12l3 3v10H.5z" fill="#dde3ea" stroke="#333"/><path d="M3 5h6v3H6v4H3zM10 7h3v6h-3" fill="#f8fafc" stroke="#567"/><path d="M12 1v4h4" fill="#222"/></svg>Feuilles (all)</li>
        <li><i class="v"></i><button class="t" aria-label="Développer"><svg><use href="#plus"/></svg></button><span>A001 - Title Sheet</span></li>
        <li><i class="v"></i><button class="t" aria-label="Développer"><svg><use href="#plus"/></svg></button><span>A101 - Site Plan</span></li>
      </ul>
      <div class="vbar"><svg><use href="#up"/></svg><div class="track"><div class="thumb tree-thumb"></div></div><svg><use href="#down"/></svg></div>
    </div>
  </section>

  <section class="canvas">
    <div class="view">
      <svg class="plan" viewBox="485 173 727 644" font-family="Liberation Sans, Arial, sans-serif" fill="none" stroke="#222" stroke-width="1" shape-rendering="auto">
        <g stroke="none">
          <path d="M684 356h201v104h-201z" fill="#d0c8b4"/>
          <path d="M885 420h14v40h-14z" fill="#d0c8b4"/>
          <path d="M885 357h82v23h4v18l19-16v66h-51v-68h-54z" fill="#24698f"/>
          <path d="M887 386h21v32h-21z" fill="#42c440"/>
          <path d="M911 386h26v32h-26z" fill="#9ab596"/><path d="M923 380h13v42h-13z" fill="#8ab098"/>
          <path d="M899 420h38v40h-38z" fill="#b07460"/>
          <path d="M888 465h103v200h-103z" fill="url(#grass)"/>
        </g>
        <!-- site outline -->
        <path d="M1151 463L932 296.500H570.500V465.500H884M1144 463L930 301.500H575.500V465M995 463h156M995 458h142" stroke="#333"/>
        <path d="M575 353.500h420M575 358.500h109M541 460.500h143M570 364h5" stroke="#666"/>
        <!-- grid lines -->
        <g stroke="#333">
          <path d="M684.500 275v207M735.500 275v207M786.500 275v207M837.500 275v207M888.500 275v185M939.500 275v460M991.500 275v80" stroke-dasharray="20 6 5 6"/>
          <path d="M888.500 722v14M991.500 722v14"/>
          <path d="M680 283.500h313M545.500 355v110M541 357.500h33" stroke="#555"/>
          <path d="M541 409.500h450" stroke-dasharray="26 5 6 5"/>
          <path d="M872 512.500h141M872 563.500h141" stroke="#667" stroke-dasharray="22 5 6 5"/>
          <path d="M872 665.500h141M872 716.500h141"/>
          <path d="M1014 341.500h-11l-8 20M1014 396.500h-11l-8 10M1014 482.500h-8l-10-24"/>
        </g>
        <!-- walls -->
        <path d="M683 356.500h202" stroke-width="3" stroke="#333"/><path d="M684 357h201" stroke="#889a90"/>
        <path d="M684.500 356v105M684 460.500h201" stroke="#000" stroke-width="2"/>
        <path d="M885 355.500h55" stroke="#000" stroke-width="3"/><path d="M940 358h50M940 354h51"/>
        <path d="M885 359v26M885 384h38M909.500 385v34M938.500 384v76M886 419h52M897.500 420v41M887 385v33" stroke="#000" stroke-width="1.500"/>
        <path d="M940 449h51" stroke="#000" stroke-width="2"/><path d="M941 454.500h50M885 461.500h110M885 464.500h110"/>
        <path d="M884.500 508v212h3V508M992.500 508v212h3V508" fill="#999" stroke="#111"/>
        <path d="M887.500 548v66M992.500 548v66" stroke="#fff"/>
        <path d="M885 460v48M994.500 460v48M991.500 358v28" stroke="#000" stroke-width="3"/>
        <path d="M992.500 382v80M995.500 350v115" stroke="#222" stroke-width="1.500"/>
        <path d="M967 359v21h24M971 359v90M971 380l20-18M975 359l-6 7M971 398l20-16" />
        <path d="M973 403h18M973 410h18M973 417h18M973 424h18M973 431h18M973 438h18" stroke="#123" stroke-dasharray="5 3"/>
        <path d="M917 359l74 90M890 388l17 28M907 388l-17 28M913 388l22 28M935 388l-22 28M900 421l37 38M937 421l-37 38M938 440l33-40" stroke="#333" stroke-width=".8"/>
        <!-- kitchen -->
        <path d="M725 359l101 101M811 359L711 460" stroke="#444" stroke-width=".8"/>
        <g fill="#fff" stroke="#222">
          <rect x="711" y="384" width="27" height="8" rx="2"/><rect x="711" y="398" width="27" height="8" rx="2"/><rect x="711" y="413" width="27" height="8" rx="2"/><rect x="711" y="427" width="27" height="8" rx="2"/>
          <rect x="717" y="379" width="15" height="61"/><path d="M717 409h15"/>
          <path d="M719 388l3-2 1 3zM727 388l3-2 1 3zM719 402l3-2 1 3zM727 402l3-2 1 3zM719 417l3-2 1 3zM727 417l3-2 1 3zM719 431l3-2 1 3zM727 431l3-2 1 3z"/>
          <circle cx="760" cy="409" r="8.500"/>
          <rect x="787" y="409.500" width="76" height="11"/><rect x="787" y="446.500" width="76" height="11"/><rect x="818" y="410" width="14" height="9"/><path d="M825 410v9"/>
          <rect x="818" y="447" width="13" height="9" stroke-width="1.500"/><circle cx="821" cy="450" r="1.500"/><circle cx="827" cy="450" r="1.500"/><circle cx="821" cy="454" r="1.500"/><circle cx="827" cy="454" r="1.500"/>
          <circle cx="790" cy="405.500" r="2.500"/><circle cx="802" cy="405.500" r="2.500"/><circle cx="813" cy="405.500" r="2.500"/><circle cx="836" cy="405.500" r="2.500"/><circle cx="848" cy="405.500" r="2.500"/><circle cx="859" cy="405.500" r="2.500"/>
          <rect x="900" y="423" width="10" height="11"/><rect x="900" y="436" width="10" height="10"/><rect x="885" y="431" width="9" height="15"/><rect x="886" y="421" width="7" height="9"/><rect x="912" y="389" width="5" height="8"/><ellipse cx="916" cy="411" rx="5" ry="3"/>
        </g>
        <path d="M786.500 409v48" stroke="#333"/>
        <path d="M885 388h-14l4 10-4 0M885 417h-14l4-12" stroke="#333"/>
        <rect x="857.500" y="397" width="22" height="11" rx="5.500"/><rect x="764.500" y="379.500" width="28" height="10"/><rect x="918" y="370" width="21" height="11" rx="5.500"/><rect x="941" y="389" width="28" height="10"/><rect x="922" y="406" width="20" height="10" rx="5"/>
        <!-- living -->
        <path d="M889 533l102 101M991 533L889 634" stroke="#455" stroke-width=".8"/>
        <g fill="#fff" stroke="#222">
          <rect x="900.500" y="467.500" width="26" height="6"/><path d="M906 468h14v3h-14z"/>
          <rect x="924" y="503" width="10" height="10"/><rect x="924" y="514" width="10" height="10"/><rect x="924" y="525" width="10" height="10"/>
          <rect x="934" y="525" width="10" height="10"/><rect x="934" y="536" width="10" height="10"/><rect x="934" y="547" width="10" height="10"/><rect x="934" y="558" width="10" height="10"/>
          <rect x="966" y="527" width="7" height="7"/><rect x="966" y="603" width="7" height="7"/>
          <rect x="961.500" y="536.500" width="15" height="45"/><rect x="952.500" y="581.500" width="22" height="18"/><rect x="974" y="548" width="5" height="46"/><rect x="963" y="537" width="14" height="6"/><rect x="963" y="594" width="14" height="6"/>
          <ellipse cx="914" cy="553" rx="4" ry="7"/><circle cx="909" cy="554" r="4.500"/><ellipse cx="914" cy="574" rx="4" ry="7"/><circle cx="909" cy="573" r="4.500"/>
          <circle cx="939.500" cy="645" r="13.500"/><circle cx="939.500" cy="645" r="2.500"/>
          <rect x="937.500" y="692.500" width="27" height="17"/>
        </g>
        <rect x="925.500" y="535.500" width="27" height="10"/>
        <path d="M939.500 500v140" stroke="#111" stroke-dasharray="20 6 5 6"/>
        <path d="M913 665.500h53" stroke="#000" stroke-width="3"/><path d="M913.500 665v14M965.500 665v14M902 668l-5 11M902 668l4 11M978 668l-5 11M978 668l4 11"/>
        <rect x="891.500" y="676.500" width="21" height="11" rx="5.500"/><rect x="967.500" y="676.500" width="21" height="11" rx="5.500"/>
        <!-- center marks -->
        <path d="M763 402h10M768 397v10M921 402h10M926 397v10M895 399h10M900 394v10M953 402h10M958 397v10M913 443h10M918 438v10M934 583h11M939.500 577v12M765 399l6 6M771 399l-6 6M897 396l6 6M903 396l-6 6M923 399l6 6M929 399l-6 6M955 399l6 6M961 399l-6 6M915 440l6 6M921 440l-6 6M936 580l6 6M942 580l-6 6" stroke="#000" stroke-width="1.500"/>
        <!-- section lines -->
        <path d="M820.500 255v220.500h79.500v265" stroke="#222"/><path d="M617 443.500h526" stroke="#555"/>
        <path d="M900 737h16v4h-16zM1142 427h4v16h-4z" fill="#000" stroke="none"/>
        <!-- tanks and leaders -->
        <rect x="1002.500" y="415.500" width="59" height="15" rx="7.500"/><rect x="1002.500" y="435.500" width="59" height="15" rx="7.500"/><circle cx="1005" cy="423" r="2.500"/><circle cx="1005" cy="443" r="2.500"/>
        <path d="M1102 392c-34-2-51 7-66 29l1-5M1036 421l5-3M1102 395c-24 4-46 22-57 46l0-6M1045 441l4-4"/>
        <rect x="1102.500" y="385.500" width="74" height="26" fill="#fff"/><rect x="590.500" y="410.500" width="64" height="17" fill="#fff"/>
        <!-- grid bubbles -->
        <g fill="#fff"><circle cx="684" cy="262" r="11"/><circle cx="735" cy="262" r="11"/><circle cx="787" cy="262" r="11"/><circle cx="837" cy="262" r="11"/><circle cx="888" cy="262" r="11"/><circle cx="940" cy="262" r="11"/><circle cx="991" cy="262" r="11"/>
        <circle cx="529" cy="358" r="11"/><circle cx="529" cy="409" r="11"/><circle cx="529" cy="460" r="11"/>
        <circle cx="1025" cy="341" r="11"/><circle cx="1025" cy="396" r="11"/><circle cx="1025" cy="482" r="11"/><circle cx="1025" cy="512" r="11"/><circle cx="1025" cy="563" r="11"/><circle cx="1025" cy="665" r="11"/><circle cx="1025" cy="716" r="11"/></g>
        <g fill="#fff" stroke="#333"><path d="M866 525l3.500-5h7l3.500 5-3.500 5h-7zM866 550l3.500-5h7l3.500 5-3.500 5h-7zM866 576l3.500-5h7l3.500 5-3.500 5h-7zM866 601l3.500-5h7l3.500 5-3.500 5h-7zM999 525l3.500-5h7l3.500 5-3.500 5h-7zM999 550l3.500-5h7l3.500 5-3.500 5h-7zM999 576l3.500-5h7l3.500 5-3.500 5h-7zM999 601l3.500-5h7l3.500 5-3.500 5h-7z"/></g>
        <!-- elevation markers -->
        <g fill="#000" stroke="none"><path d="M755 332h18l-9 10zM611 378v18l7-9zM808 697h18l-9-9zM1076 524v18l-7-9z"/></g>
        <g fill="#fff"><circle cx="764" cy="324" r="11"/><circle cx="602" cy="387" r="10.500"/><circle cx="817" cy="705" r="11"/><circle cx="1084" cy="533" r="10.500"/></g>
        <g stroke="#1a35b0"><path d="M821 229l14 13-14 14zM589 443l15-15 14 15z" fill="#1a35b0"/><circle cx="821" cy="242" r="10" fill="#fff"/><circle cx="604" cy="443" r="10" fill="#fff"/><path d="M811 242h20M594 443h20"/></g>
        <g stroke="none" fill="#222" font-size="10" text-anchor="middle">
          <text x="681" y="265">1</text><text x="733" y="265">2</text><text x="784" y="265">3</text><text x="835" y="265">4</text><text x="886" y="265">5</text><text x="937" y="265">6</text><text x="988" y="265">7</text>
          <text x="528" y="361">A</text><text x="528" y="412">B</text><text x="527" y="463">C</text>
          <text x="1024" y="345">A</text><text x="1023" y="399">B</text><text x="1023" y="485">C</text><text x="1023" y="515">D</text><text x="1023" y="566">E</text><text x="1023" y="668">F</text><text x="1023" y="719">G</text>
        </g>
        <g stroke="none" fill="#111" font-size="6" font-weight="bold" text-anchor="middle">
          <text x="709" y="279">3000</text><text x="760" y="279">3000</text><text x="811" y="279">3000</text><text x="862" y="279">3000</text><text x="914" y="279">3000</text><text x="965" y="279">3000</text>
          <text transform="translate(541 383) rotate(-90)">3000</text><text transform="translate(541 434) rotate(-90)">3000</text>
          <text x="602" y="389">A104</text><text x="620" y="389">2</text><text x="817" y="707">A103</text><text x="817" y="687">1</text><text x="1085" y="535">A105</text><text x="1065" y="535">3</text><text x="764" y="326">-</text>
          <text x="873" y="527">46</text><text x="873" y="552">46</text><text x="873" y="578">46</text><text x="873" y="603">46</text><text x="1006" y="527">46</text><text x="1006" y="552">46</text><text x="1006" y="578">46</text><text x="1006" y="603">46</text>
          <g fill="#1a35b0"><text x="820" y="240">1</text><text x="820" y="248">A104</text><text x="603" y="440">2</text><text x="603" y="449">A102</text></g>
        </g>
        <g stroke="none" fill="#222" font-size="7" text-anchor="middle">
          <text x="778" y="374">Kitchen &amp; Dining</text><text x="778" y="387">101</text><text x="776" y="401">73 m²</text><text x="868" y="405">105</text><text x="928" y="378">103</text><text x="954" y="384">Hall</text><text x="954" y="397">105</text><text x="953" y="410">24 m²</text><text x="897" y="404">Mech.</text><text x="924" y="404">Bath</text><text x="932" y="414">104</text><text x="921" y="448">Laundry</text><text x="961" y="452">DN</text>
          <text x="938" y="531">Living</text><text x="939" y="543">106</text><text x="937" y="556">70 m²</text><text x="902" y="685">105A</text><text x="978" y="685">105B</text>
        </g>
        <g stroke="none" fill="#222" font-size="8"><text x="594" y="421">Outdoor Dining</text><text x="1107" y="397">Rain water</text><text x="1107" y="406">collection tanks</text><text x="941" y="703">Deck</text></g>
        <text x="703" y="499" stroke="none" fill="#333" font-size="15">Room Legend</text>
        <g stroke="#222"><rect x="703.500" y="515.500" width="16" height="16" fill="#9ab596"/><rect x="703.500" y="537.500" width="16" height="16" fill="#24698f"/><rect x="703.500" y="558.500" width="16" height="16" fill="#d0c8b4"/><rect x="703.500" y="580.500" width="16" height="16" fill="#b07460"/><rect x="703.500" y="601.500" width="16" height="16" fill="#bfe488"/><rect x="703.500" y="623.500" width="16" height="16" fill="#42c440"/></g>
        <g stroke="none" fill="#333" font-size="10"><text x="723" y="526">Bath</text><text x="723" y="548">Hall</text><text x="723" y="569">Kitchen &amp; Dining</text><text x="723" y="591">Laundry</text><text x="723" y="612">Living</text><text x="723" y="634">Mech.</text></g>
        <g stroke="none"><use href="#help" x="808" y="218" width="12" height="12"/><use href="#help" x="670" y="306" width="12" height="12"/><use href="#help" x="959" y="261" width="12" height="12"/><use href="#help" x="907" y="339" width="12" height="12"/><use href="#help" x="975" y="414" width="12" height="12"/><use href="#help" x="945" y="668" width="12" height="12"/><use href="#help" x="1104" y="376" width="12" height="12"/></g>
      </svg>
      <div class="mdi"><svg viewBox="0 0 40 12"><path d="M.5 6.500h9v2h-9z" fill="#fff" stroke="#444"/><path d="M17.500 1.500h7v7h-7zM15.500 3.500h7v7h-7z" fill="#fff" stroke="#333"/><path d="M18 6h3v3h-3z" fill="#333"/><path d="M30.500 1.500h3l1.500 2 1.500-2h3L36.500 6l3 4.500h-3L35 8.500l-1.500 2h-3l3-4.500z" fill="#fff" stroke="#333"/></svg></div>
      <div class="navbar">
        <svg viewBox="0 0 29 97"><circle cx="23" cy="5.500" r="3" fill="#ddd" stroke="#999"/><path d="M5 27a8 8 0 0 1 8-8h8v8a8 8 0 0 1-16 0" fill="#e4e8ee" stroke="#8d96a3"/><circle cx="13" cy="27" r="4" fill="#fff" stroke="#8d96a3"/><path d="M12 43h5l-2.500 3zM12 78h5l-2.500 3z" fill="#888"/><path d="M4 48.500h21" stroke="#bbb"/><path d="M8 56h10v10H8z" fill="#9ecb94" stroke="#7eaa78"/><circle cx="16" cy="64" r="3" fill="#fff" stroke="#777"/><path d="M18 66l4 4" stroke="#777" stroke-width="2"/><circle cx="23" cy="91" r="3" fill="#ddd" stroke="#999"/><text x="14" y="37" font-size="8" font-family="Liberation Sans, sans-serif" fill="#4679b4">2D</text></svg>
      </div>
    </div>
    <div class="vbar mainbar"><svg><use href="#up"/></svg><div class="track"><div class="thumb mid-thumb"></div></div><svg><use href="#down"/></svg></div>
    <div class="viewbar">
      <span>1 : 100</span>
      <svg viewBox="0 0 16 16"><path d="M1 2h14v12H1z" fill="#ddd" stroke="#333" stroke-width="1.500"/><path d="M2 3h3v3H2zM11 3h3v3h-3zM2 10h3v3H2zM11 10h3v3h-3zM5 6h6v4H5z" fill="#667"/></svg>
      <svg viewBox="0 0 16 16"><path d="M1 6l4-4h10v7l-4 5H1z" fill="#e8ebf0" stroke="#333"/><path d="M1 6h10v8M11 6l4-4" fill="none" stroke="#333"/></svg>
      <svg viewBox="0 0 16 16"><circle cx="7" cy="7" r="4" fill="#ffd24a" stroke="#d99a10"/><path d="M7 0v2M0 7h2M2 2l1.500 1.500M12 2l-1.500 1.500M2 12l1.500-1.500" stroke="#d99a10"/><path d="M9 8l6 7M15 8l-6 7" stroke="#d02020" stroke-width="2"/></svg>
      <svg viewBox="0 0 16 16"><circle cx="7" cy="6" r="5" fill="#d8ebfa" stroke="#3d87cc" stroke-width="1.500"/><path d="M1 14h8" stroke="#667" stroke-width="2"/><path d="M9 8l6 7M15 8l-6 7" stroke="#d02020" stroke-width="2"/></svg>
      <svg viewBox="0 0 16 16"><path d="M3 3h13v4H8v7H4V7H3z" fill="#6fb0e8" stroke="#1f62ae"/><path d="M0 11h3M6 11h9" stroke="#c03030" stroke-width="1.500"/></svg>
      <svg viewBox="0 0 16 16"><path d="M3 4h8v4H8v6H4V8H3z" fill="#6fb0e8" stroke="#1f62ae"/><circle cx="13" cy="6" r="3" fill="#fff" stroke="#2f86e4"/><path d="M12 10h2v4h-2M0 11h3" stroke="#555"/></svg>
      <svg viewBox="0 0 16 16"><path d="M0 4c2 0 2 5 4 5s2-4 4-4 1 3 3 3 4-1 4-3-3-3-5-2M11 8c0 3-4 4-6 3" fill="none" stroke="#333" stroke-width="1.200"/></svg>
      <svg viewBox="0 0 16 16"><circle cx="8" cy="6" r="3.500" fill="#eef6ff" stroke="#2f86e4" stroke-width="1.300"/><path d="M7 10h2v4H7z" fill="#fff" stroke="#2f86e4"/></svg>
      <svg viewBox="0 0 16 16"><path d="M5 14H1V3h13v4" fill="none" stroke="#222" stroke-width="1.500" stroke-dasharray="3 1"/><circle cx="11" cy="11" r="3.500" fill="#eee" stroke="#222"/><path d="M11 9v4M9 11h4" stroke="#222"/></svg>
      <svg viewBox="0 0 16 16"><path d="M1 6l5-4 6 2v10H1z" fill="#ddd" stroke="#333"/><path d="M4 8v6M8 8v6M1 9h10" stroke="#c03030" stroke-width="1.500"/><circle cx="13" cy="6" r="3" fill="#ffc22e" stroke="#d08a10"/></svg>
      <svg viewBox="0 0 16 16"><path d="M1 1v14M15 1v6M1 3h14M1 13h7" fill="none" stroke="#333" stroke-dasharray="3 1"/><path d="M8 9h7v5H8z" fill="#aaa" stroke="#333"/><path d="M10 9V7h3v2" fill="none" stroke="#333"/></svg>
      <div class="hbar"><svg viewBox="0 0 5 8"><path d="M5 0L0 4l5 4z" fill="#333"/></svg><div class="hthumb"></div><svg viewBox="0 0 5 8"><path d="M0 0l5 4-5 4z" fill="#333"/></svg></div>
    </div>
  </section>

  <section class="props">
    <h1>Propriétés<button aria-label="Fermer"><svg><use href="#close"/></svg></button></h1>
    <div class="pbody">
      <button class="type"><span class="thumbnail"><svg viewBox="0 0 32 32"><path d="M1 1h19v2h9v10h-9v16H1z" fill="#cdd1d8" stroke="#5f656d"/><path d="M12 12h18v18H12z" fill="#f1f2f4" stroke="#5f656d"/><path d="M20 3v9h-8v17" fill="none" stroke="#333" stroke-dasharray="2 2"/></svg></span><span>Plan d'étage<br>Floor Plan</span><svg class="c"><use href="#caret"/></svg></button>
      <div class="inst"><select aria-label="Type de vue"><option>Plan d'étage: Level 1</option></select><button><svg viewBox="0 0 14 14"><path d="M1 4l2-3h3v5H1zM7 4l2-3h4v4H7zM1 8h5v5H1z" fill="#fff" stroke="#445"/><path d="M7 6h6v7H7z" fill="#dce9f7" stroke="#234a86"/><path d="M8 8h4M8 10h4" stroke="#234a86"/></svg>Modifier le type</button></div>
      <div class="sheet">
        <table>
          <colgroup><col class="k"><col class="val"><col class="x"></colgroup>
          <tbody>
          <tr class="h"><th colspan="3">Graphismes<svg><use href="#fold"/></svg></th></tr>
          <tr><td><label for="sc">Echelle de la vue</label></td><td><input id="sc" type="text" value="1 : 100"></td><td></td></tr>
          <tr class="dim"><td>Valeur de l'échelle    1:</td><td>100</td><td></td></tr>
          <tr><td>Afficher le modèle</td><td>Normal(e)</td><td></td></tr>
          <tr><td>Niveau de détail</td><td>Moyen</td><td></td></tr>
          <tr><td>Visibilité des éléments</td><td>Afficher l'original</td><td></td></tr>
          <tr><td>Numéro du détail</td><td>1</td><td></td></tr>
          <tr><td>Rotation sur la feuille</td><td>Aucun</td><td></td></tr>
          <tr><td>Remplacements visibilité / ...</td><td><button>Modifier...</button></td><td></td></tr>
          <tr><td>Options d'affichage des gr...</td><td><button>Modifier...</button></td><td></td></tr>
          <tr><td>Orientation</td><td>Nord du projet</td><td></td></tr>
          <tr class="dim"><td>Affichage des jonctions de ...</td><td>Nettoyer toutes les jonction...</td><td></td></tr>
          <tr><td>Discipline</td><td>Architecture</td><td></td></tr>
          <tr><td>Afficher les lignes cachées</td><td>Par discipline</td><td></td></tr>
          <tr><td>Emplacement du choix des...</td><td>Arrière-plan</td><td></td></tr>
          <tr><td>Choix des couleurs</td><td><button>Name</button></td><td></td></tr>
          <tr><td>Choix des couleurs du systè...</td><td><button>Modifier...</button></td><td></td></tr>
          <tr><td>Style d'affichage de l'analy...</td><td>Aucun(e)</td><td></td></tr>
          <tr><td><label for="sun">Trajectoire du soleil</label></td><td><input id="sun" type="checkbox"></td><td></td></tr>
          <tr class="h"><th colspan="3">Niveau en fond de plan<svg><use href="#fold"/></svg></th></tr>
          <tr><td>Plage: niveau de base</td><td>Aucun(e)</td><td></td></tr>
          <tr class="dim"><td>Plage: niveau supérieur</td><td>Sans liaison</td><td></td></tr>
          <tr class="dim"><td>Orientation du niveau en fo...</td><td>Regarder vers le bas</td><td></td></tr>
          <tr class="h"><th colspan="3">Etendues<svg><use href="#fold"/></svg></th></tr>
          <tr><td><label for="crop">Cadrer la vue</label></td><td><input id="crop" type="checkbox" checked></td><td></td></tr>
          <tr><td><label for="cropv">Zone cadrée visible</label></td><td><input id="cropv" type="checkbox"></td><td></td></tr>
          </tbody>
        </table>
        <div class="vbar"><svg><use href="#up"/></svg><div class="track"><div class="thumb prop-thumb"></div></div><svg><use href="#down"/></svg></div>
      </div>
      <div class="foot"><a href="#aide">Aide des propriétés</a><button disabled>Appliquer</button></div>
    </div>
  </section>
</main>
<footer class="status"><span></span><span></span></footer>
</body>
</html>
```
FILE: styles.css
```css
* { box-sizing: border-box; }
body { margin: 0; height: 100vh; display: flex; flex-direction: column; overflow: hidden; background: #e2e2e4; color: #2b2b2b; font: 12px/16px "Noto Sans", "Open Sans", sans-serif; }
button, input, select { font: inherit; color: inherit; }
button { margin: 0; padding: 0; border: 0; background: none; }
h1, h2 { margin: 0; font: inherit; }
svg { display: block; flex: none; }
.defs { position: absolute; width: 0; height: 0; }

.top { position: relative; }
.titlebar { display: flex; height: 24px; background: linear-gradient(#606060, #8a8a8a); border-bottom: 1px solid #4a4a4a; }
.qat { display: flex; flex: none; width: 561px; padding-left: 46px; align-items: center; color: #333; }
.qat button, .info button { display: flex; align-items: center; justify-content: center; width: 25px; height: 22px; flex: none; }
.qat button svg, .info button svg { width: 16px; height: 16px; }
.qat .cr, .info .cr { width: 11px; }
.qat .cr svg, .info .cr svg { width: 6px; height: 4px; }
.qat .last svg { width: 9px; height: 8px; }
.qat .on { background: #b9dcf8; border: 1px solid #4e94d8; }
.qat .on svg { width: 20px; height: 20px; }
.sep { width: 11px; height: 22px; flex: none; background: linear-gradient(#8c8c8c, #8c8c8c) 5px 0 / 1px 100% no-repeat; }
.doc { flex: 1; display: flex; justify-content: center; align-items: stretch; padding-left: 12px; line-height: 24px; color: #14222e; white-space: nowrap; background: linear-gradient(90deg, #5d9fd0, #6fb3e0 45%, #8cc4ea 60%, #4f8fc6 80%, #62a8dc); }
.doc mark { padding: 0 4px; background: linear-gradient(#8cc800, #74b400); color: #14222e; }
.expand { width: 15px; display: flex; align-items: center; justify-content: center; background: #8a8a8a; }
.expand svg { width: 5px; height: 8px; }
.search { width: 186px; height: 23px; margin: 0; padding: 0 2px; border: 1px solid #555; background: #fff; font-style: italic; }
.search::placeholder { color: #555; opacity: 1; }
.info { display: flex; align-items: center; width: 277px; color: #333; background: linear-gradient(#7c7c7c, #a6a6a6); }
.info .conn { width: auto; gap: 6px; padding: 0 12px 0 4px; color: #111; }
.info > button:nth-of-type(6) { margin-left: 6px; }
.wctl { display: flex; flex: none; width: 134px; padding: 0 3px 3px 17px; background: linear-gradient(90deg, #4f7fb4, #a9c6e2); }
.wctl button { flex: 31; display: flex; align-items: center; justify-content: center; border: 1px solid #d4dfe8; border-top: 0; background: linear-gradient(#a9b7c2, #6f8292); }
.wctl .x { flex: 53; background: linear-gradient(#d98a80, #b8281c 50%, #cf4a38); }
.wctl svg { width: 16px; height: 16px; }
.tabs { display: flex; align-items: flex-end; gap: 19px; height: 20px; padding-left: 47px; background: #3c3c3c; white-space: nowrap; }
.tabs a { color: #f2f2f2; text-decoration: none; line-height: 18px; height: 18px; }
.tabs .sel { padding: 0 9px; margin-right: -10px; background: linear-gradient(#e4e4e4, #fafafa); color: #333; border-radius: 2px 2px 0 0; }
.min { display: flex; align-items: center; gap: 5px; height: 18px; margin-left: 14px; color: #eee; }
.pill { width: 14px; height: 8px; }
.c { width: 6px; height: 4px; }
.app { position: absolute; left: 0; top: 0; width: 42px; height: 42px; display: flex; align-items: center; gap: 5px; padding-left: 7px; background: linear-gradient(#b8c400, #a2ae00); border: 1px solid #4a5000; color: #2c3a00; }
.r { width: 20px; height: 28px; }

.ribbon { display: grid; grid-template-columns: 94fr 453fr 120fr 157fr 323fr 166fr 103fr 175fr 9fr; height: 101px; background: #fdfdfd; border-bottom: 1px solid #8e8e8e; }
.panel { min-width: 0; display: flex; flex-direction: column; border-right: 1px solid #b4b4b4; }
.body { flex: 1; display: flex; gap: 6px; padding: 3px 0 0 6px; }
.panel h2 { height: 19px; display: flex; align-items: center; justify-content: center; gap: 8px; border-top: 1px solid #cfcfcf; background: #f0f0f0; white-space: nowrap; color: #444; }
.panel h2 .c { width: 8px; height: 5px; }
.body button { white-space: pre; color: #444; }
.big { display: flex; flex-direction: column; align-items: center; width: 37px; flex: none; line-height: 16px; text-align: center; }
.big svg { width: 30px; height: 32px; margin: 2px 0 6px; }
.big .c { width: 6px; height: 4px; margin: 2px 0; }
.mod { justify-content: center; padding-left: 0; }
.mod .big { width: auto; }
.mod .ar { width: 16px; height: 24px; margin: 7px 0 10px; }
.col { display: grid; grid-auto-rows: 26px; align-content: start; justify-items: start; }
.col button { display: flex; align-items: center; gap: 6px; }
.col svg { width: 16px; height: 16px; }
.col .c { width: 6px; height: 4px; margin-left: 2px; }
.col .off { color: #b4b4b4; }
.ouv { gap: 3px; padding-left: 4px; }
.ouv .big { width: 36px; }
.ouv .col { margin-left: 3px; }
.mid { padding-top: 12px; }
.c1 { width: 103px; }
.c2 { width: 68px; }
.c3 { width: 150px; }
.tail { background: linear-gradient(#aaa, #777); }

.work { flex: 1; min-height: 0; display: grid; grid-template-columns: 480px minmax(0, 1fr) 367px; gap: 4px; padding-top: 27px; }
.browser, .props { display: flex; flex-direction: column; min-height: 0; min-width: 0; }
.browser { background: #f0f0f0; }
.work h1 { display: flex; justify-content: space-between; align-items: center; height: 22px; flex: none; padding: 2px 4px 0 3px; margin-bottom: 2px; font-size: 11px; color: #555f10; background: #c0ce00; }
.work h1 button svg { width: 10px; height: 10px; }
.pane { flex: 1; min-height: 0; display: flex; margin-right: 1px; background: #fff; border: 1px solid #777; border-width: 2px 0 0 1px; }
.tree { flex: 1; margin: 0; padding: 0; list-style: none; overflow: hidden; display: grid; grid-auto-rows: 19px 18px 18px; align-content: start; color: #222; }
.tree li { display: flex; align-items: center; white-space: nowrap; }
.tree i { width: 22px; height: 100%; flex: none; }
.tree .v { background: repeating-linear-gradient(#999 0 1px, #fff0 1px 2px) 8px 0 / 1px 100% no-repeat; }
.tree .e { background: repeating-linear-gradient(#999 0 1px, #fff0 1px 2px) 8px 0 / 1px 100% no-repeat, repeating-linear-gradient(90deg, #999 0 1px, #fff0 1px 2px) 8px 50% / 14px 1px no-repeat; }
.tree .z { background-size: 1px 50%, 14px 1px; }
.t { width: 22px; height: 100%; flex: none; padding-left: 3px; background: repeating-linear-gradient(#999 0 1px, #fff0 1px 2px) 8px 0 / 1px 100% no-repeat, repeating-linear-gradient(90deg, #999 0 1px, #fff0 1px 2px) 8px 50% / 14px 1px no-repeat; }
.t.end { background-size: 1px 50%, 14px 1px; }
.t svg { width: 11px; height: 11px; }
.ic { width: 16px; height: 16px; margin-right: 6px; }
.tree span, .tree b { padding: 0 4px; line-height: 18px; }
.tree b { background: #3a96f4; color: #fff; padding: 0 3px; margin-left: 1px; }
.tree .hl { display: flex; align-items: center; height: 19px; padding: 0 3px 0 0; background: #ff0; }
.vbar { width: 16px; flex: none; display: flex; flex-direction: column; align-items: center; padding: 7px 0 6px; gap: 6px; background: #f2f2f2; }
.vbar svg { width: 8px; height: 5px; }
.track { flex: 1; min-height: 0; width: 100%; }
.thumb { border: 1px solid #999; border-radius: 2px; background: repeating-linear-gradient(#666 0 1px, #fff0 1px 4px) center / 7px 9px no-repeat, linear-gradient(90deg, #f2f2f4, #c8c8ce); }
.tree-thumb { height: 81%; }
.mid-thumb { height: 16px; margin-top: 296px; }
.prop-thumb { height: 60%; }

.canvas { display: grid; grid-template: minmax(0, 1fr) 18px / minmax(0, 1fr) 17px; background: #fff; border: 1px solid #666; border-right-color: #ddd; border-bottom: 0; }
.view { position: relative; min-height: 0; }
.plan { width: 100%; height: 100%; }
.mdi { position: absolute; right: 4px; top: 6px; }
.mdi svg { width: 40px; height: 12px; }
.navbar { position: absolute; right: 1px; top: 24px; background: #efefef; border: 1px solid #aaa; border-radius: 5px; }
.navbar svg { width: 28px; height: 95px; }
.viewbar { grid-column: 1 / 3; display: flex; align-items: center; gap: 5px; padding-left: 22px; background: #efefef; }
.viewbar > svg { width: 16px; height: 16px; }
.viewbar span { width: 51px; }
.hbar { flex: 1; display: flex; align-items: center; justify-content: space-between; height: 16px; margin: 0 22px 0 0; }
.hbar svg { width: 5px; height: 8px; }
.hthumb { width: 16px; height: 15px; border: 1px solid #999; border-radius: 2px; background: repeating-linear-gradient(90deg, #666 0 1px, #fff0 1px 3px) center / 9px 8px no-repeat, #e4e4e4; }

.props h1 { background: #bfcddb; color: #4d5a68; padding-right: 3px; }
.pbody { flex: 1; min-height: 0; display: flex; flex-direction: column; border-top: 2px solid #777; border-left: 2px solid #777; background: #f0f0f0; }
.type { display: flex; align-items: center; height: 72px; flex: none; padding: 2px 2px 2px 3px; gap: 4px; text-align: left; line-height: 17px; color: #444; background: linear-gradient(#fdfdfd, #ececec); }
.thumbnail { width: 69px; height: 68px; display: flex; align-items: center; justify-content: center; border: 1px solid #ccc; background: #f7f7f7; }
.thumbnail svg { width: 32px; height: 32px; }
.type .c { margin-left: auto; width: 8px; height: 5px; color: #222; }
.inst { display: flex; align-items: center; height: 25px; flex: none; gap: 6px; }
.inst select { width: 245px; height: 22px; padding: 0 20px 0 2px; border: 1px solid #777; border-radius: 2px; appearance: none; background: linear-gradient(45deg, #fff0 50%, #222 50%) calc(100% - 9px) 9px / 4px 4px no-repeat, linear-gradient(-45deg, #fff0 50%, #222 50%) calc(100% - 5px) 9px / 4px 4px no-repeat, linear-gradient(#f2f2f2, #d0d0d0); }
.inst button { display: flex; align-items: center; gap: 4px; white-space: nowrap; }
.inst button svg { width: 14px; height: 14px; }
.sheet { flex: 1; min-height: 0; display: flex; overflow: hidden; }
.sheet .vbar { margin: 0 1px; }
.sheet table { flex: 1; height: min-content; table-layout: fixed; border-collapse: collapse; background: #fff; width: 100%; }
.sheet col.k { width: 168px; }
.sheet col.x { width: 13px; }
.sheet tr { height: 20px; }
.sheet td { height: 20px; padding: 0 0 0 1px; border: 1px dashed #a8a8a8; border-left: 0; border-top: 0; line-height: 19px; white-space: pre; }
.sheet td:first-child { padding-left: 7px; }
.sheet th { height: 20px; padding: 0 0 0 1px; text-align: left; font-weight: normal; line-height: 19px; background: #dadada; }
.sheet th svg { float: right; width: 6px; height: 8px; margin: 3px 5px 0 0; }
.dim { color: #848484; }
.sheet input[type=text] { display: block; width: 100%; height: 19px; margin: 0; padding: 0 4px; border: 1px solid #111; background: #fff; }
.sheet td button { display: block; width: 100%; height: 18px; line-height: 16px; border: 1px solid #777; border-right-width: 2px; border-bottom-width: 2px; border-radius: 3px; background: linear-gradient(#f0f0f0, #cfcfcf); }
.sheet input[type=checkbox] { appearance: none; display: block; width: 13px; height: 13px; margin: 3px 1px; border: 1px solid #8a8a8a; background: #eee; }
.sheet input:checked::after { content: ""; display: block; width: 4px; height: 8px; margin: 0 0 0 4px; border: solid #2c3f8c; border-width: 0 2px 2px 0; transform: rotate(35deg); }
.foot { display: flex; justify-content: space-between; align-items: flex-start; height: 25px; flex: none; padding: 2px 2px 0 1px; }
.foot a { color: #1f5fbf; }
.foot button { width: 71px; height: 22px; border: 1px solid #b4b4b4; border-radius: 2px; color: #8a8a8a; background: #f4f4f4; }
.status { display: flex; justify-content: center; gap: 12px; height: 5px; margin-top: 1px; flex: none; border-top: 1px solid #999; background: #d8d8d8; }
.status span { width: 215px; border: 1px solid #bbb; border-bottom: 0; background: #f2f2f2; }
```
